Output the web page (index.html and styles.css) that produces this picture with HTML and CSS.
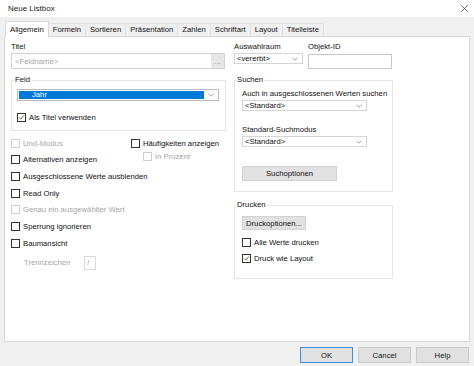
FILE: index.html
```html
<!DOCTYPE html>
<html lang="de">
  <head>
    <meta charset="UTF-8" />
    <meta name="viewport" content="width=device-width, initial-scale=1.0" />
    <title>Neue Listbox</title>
    <link rel="stylesheet" href="styles.css">
  </head>
  <body>
    <div class="titlebar">
      <span>Neue Listbox</span>
      <svg class="close" viewBox="0 0 8 8"><path d="M0.5 0.5L7.5 7.5M7.5 0.5L0.5 7.5" /></svg>
    </div>
    <div class="tabs">
      <span class="tab active">Allgemein</span>
      <span class="tab">Formeln</span>
      <span class="tab">Sortieren</span>
      <span class="tab">Präsentation</span>
      <span class="tab">Zahlen</span>
      <span class="tab">Schriftart</span>
      <span class="tab">Layout</span>
      <span class="tab">Titelleiste</span>
    </div>
    <div class="panel">
      <div class="col-left">
        <div class="label">Titel</div>
        <div class="title-input">
          <span class="placeholder">&lt;Feldname&gt;</span>
          <span class="dots">...</span>
        </div>
        <fieldset class="group feld">
          <legend>Feld</legend>
          <div class="select focus">
            <span class="value">Jahr</span>
            <span class="arrow"><svg viewBox="0 0 6 4"><path d="M0.5 0.8L3 3.2L5.5 0.8" /></svg></span>
          </div>
          <label class="check title-check"><span class="box checked"><svg viewBox="0 0 9 9"><path d="M1.3 4.4L3.4 6.6L7.6 1.8" /></svg></span>Als Titel verwenden</label>
        </fieldset>
        <div class="opts-top">
          <div class="opts-col">
            <label class="check disabled"><span class="box"></span>Und-Modus</label>
            <label class="check"><span class="box"></span>Alternativen anzeigen</label>
          </div>
          <div class="opts-col sub">
            <label class="check"><span class="box"></span>Häufigkeiten anzeigen</label>
            <label class="check disabled small"><span class="box"></span>In Prozent</label>
          </div>
        </div>
        <label class="check"><span class="box"></span>Ausgeschlossene Werte ausblenden</label>
        <label class="check"><span class="box"></span>Read Only</label>
        <label class="check disabled"><span class="box"></span>Genau ein ausgewählter Wert</label>
        <label class="check"><span class="box"></span>Sperrung ignorieren</label>
        <label class="check"><span class="box"></span>Baumansicht</label>
        <div class="sep-row">
          <span>Trennzeichen</span>
          <span class="sep-input">/</span>
        </div>
      </div>
      <div class="col-right">
        <div class="top-row">
          <div class="field scope">
            <div class="label">Auswahlraum</div>
            <div class="select">
              <span class="value">&lt;vererbt&gt;</span>
              <span class="arrow"><svg viewBox="0 0 6 4"><path d="M0.5 0.8L3 3.2L5.5 0.8" /></svg></span>
            </div>
          </div>
          <div class="field objid">
            <div class="label">Objekt-ID</div>
            <div class="textbox"></div>
          </div>
        </div>
        <fieldset class="group suchen">
          <legend>Suchen</legend>
          <div class="line">Auch in ausgeschlossenen Werten suchen</div>
          <div class="select wide">
            <span class="value">&lt;Standard&gt;</span>
            <span class="arrow"><svg viewBox="0 0 6 4"><path d="M0.5 0.8L3 3.2L5.5 0.8" /></svg></span>
          </div>
          <div class="line second">Standard-Suchmodus</div>
          <div class="select wide">
            <span class="value">&lt;Standard&gt;</span>
            <span class="arrow"><svg viewBox="0 0 6 4"><path d="M0.5 0.8L3 3.2L5.5 0.8" /></svg></span>
          </div>
          <button class="btn search-btn">Suchoptionen</button>
        </fieldset>
        <fieldset class="group drucken">
          <legend>Drucken</legend>
          <button class="btn print-btn">Druckoptionen...</button>
          <label class="check first"><span class="box"></span>Alle Werte drucken</label>
          <label class="check"><span class="box checked"><svg viewBox="0 0 9 9"><path d="M1.3 4.4L3.4 6.6L7.6 1.8" /></svg></span>Druck wie Layout</label>
        </fieldset>
      </div>
    </div>
    <div class="footer">
      <button class="btn dlg default">OK</button>
      <button class="btn dlg">Cancel</button>
      <button class="btn dlg">Help</button>
    </div>
  </body>
</html>
```

FILE: styles.css
```css
* {
  box-sizing: border-box;
}
body {
  margin: 0;
  width: 474px;
  height: 366px;
  overflow: hidden;
  background-color: #f0f0f0;
  font-family: "Liberation Sans", Arial, sans-serif;
  font-size: 7.7px;
  color: #111;
  white-space: nowrap;
}
.titlebar {
  height: 17px;
  background-color: #fff;
  display: flex;
  align-items: center;
  justify-content: space-between;
  padding: 0 6px 0 8px;
  font-size: 8px;
  color: #222;
}
.close {
  width: 7px;
  height: 7px;
}
.close path {
  stroke: #333;
  stroke-width: 0.8;
  fill: none;
}
.tabs {
  height: 19px;
  display: flex;
  align-items: flex-end;
  padding-left: 5px;
}
.tab {
  line-height: 10px;
  padding: 1px 4px;
  background-color: #f0f0f0;
  border: 1px solid #e0e0e0;
  border-left: none;
  border-bottom: none;
}
.tab.active {
  background-color: #fff;
  border-left: 1px solid #d9d9d9;
  border-color: #d9d9d9;
  padding: 3px 4px 2px;
  margin-bottom: -1px;
  position: relative;
  z-index: 1;
}
.panel {
  height: 306px;
  margin: 0 4px;
  background-color: #fff;
  border: 1px solid #d9d9d9;
  display: grid;
  grid-template-columns: 215px 159px;
  column-gap: 8px;
  align-content: start;
  padding: 4px 0 0 6px;
}
.label {
  height: 11px;
  line-height: 11px;
}
.title-input {
  margin-top: 1px;
  width: 214px;
  height: 16px;
  border: 1px solid #d2d2d2;
  display: flex;
  align-items: center;
}
.placeholder {
  flex: 1;
  padding-left: 3px;
  color: #a6a6a6;
}
.dots {
  width: 13px;
  align-self: stretch;
  background-color: #e6e6e6;
  color: #8c8c8c;
  display: flex;
  align-items: center;
  justify-content: center;
}
fieldset.group {
  margin: 6px 0 0;
  min-width: 0;
  border: 1px solid #e4e4e4;
  padding: 4px 5px 5px;
}
.group legend {
  padding: 0 1px;
  margin-left: -3px;
  line-height: 10px;
}
.select {
  display: flex;
  align-items: center;
  height: 11px;
  border: 1px solid #d6d6d6;
  background-color: #fff;
}
.select .value {
  flex: 1;
  padding-left: 2px;
  line-height: 9px;
}
.select .arrow {
  width: 14px;
  display: flex;
  align-items: center;
  justify-content: center;
}
.select svg {
  width: 6px;
  height: 4px;
}
.select svg path {
  fill: none;
  stroke: #8a8a8a;
  stroke-width: 0.8;
}
.feld .select {
  width: 202px;
  height: 12px;
  border-color: #bcbcbc;
}
.select.focus .value {
  align-self: stretch;
  margin: 1px 0 1px 1px;
  padding-left: 13px;
  background-color: #0078d7;
  color: #fff;
  line-height: 8px;
}
.check {
  display: flex;
  align-items: center;
  height: 16.67px;
}
.check.disabled {
  color: #a6a6a6;
}
.box {
  flex: none;
  width: 9px;
  height: 9px;
  margin-right: 3px;
  border: 1px solid #333;
  background-color: #fff;
}
.check.disabled .box {
  border-color: #d0d0d0;
}
.box svg {
  display: block;
  width: 7px;
  height: 7px;
}
.box svg path {
  fill: none;
  stroke: #222;
  stroke-width: 0.9;
}
.title-check {
  height: 16px;
  margin-top: 8px;
}
.opts-top {
  display: flex;
  margin-top: 4px;
}
.opts-col {
  width: 120px;
}
.opts-col.sub {
  width: auto;
}
.check.small {
  height: 10px;
  padding-left: 12px;
}
.sep-row {
  display: flex;
  align-items: center;
  height: 14px;
  margin-top: 4px;
  padding-left: 13px;
  color: #a6a6a6;
}
.sep-input {
  margin-left: 14px;
  width: 12px;
  height: 14px;
  border: 1px solid #dadada;
  padding-left: 2px;
  line-height: 12px;
}
.top-row {
  display: flex;
  gap: 5px;
}
.scope {
  width: 69px;
}
.scope .select {
  margin-top: 1px;
}
.objid {
  width: 84px;
}
.textbox {
  margin-top: 2px;
  height: 15px;
  border: 1px solid #c8c8c8;
}
.suchen,
.drucken {
  width: 159px;
}
fieldset.suchen {
  padding: 4px 7px 10px;
}
fieldset.drucken {
  margin-top: 8px;
  padding: 6px 7px 11px;
}
.suchen legend,
.drucken legend {
  margin-left: -6px;
}
.line {
  line-height: 10px;
}
.line.second {
  margin-top: 14px;
}
.select.wide {
  margin-top: 1px;
  width: 125px;
}
.btn {
  font: inherit;
  color: #111;
  background-color: #e1e1e1;
  border: 1px solid #d2d2d2;
  padding: 0;
  display: flex;
  align-items: center;
  justify-content: center;
}
.search-btn {
  margin-top: 19px;
  width: 95px;
  height: 15px;
}
.print-btn {
  width: 64px;
  height: 14px;
}
.check.first {
  margin-top: 4px;
}
.footer {
  height: 24px;
  display: flex;
  justify-content: flex-end;
  gap: 5px;
  padding: 5px 5px 0 0;
}
.btn.dlg {
  width: 53px;
  height: 16px;
  border-color: #cacaca;
}
.btn.dlg.default {
  border-color: #3d8fdc;
}
```
